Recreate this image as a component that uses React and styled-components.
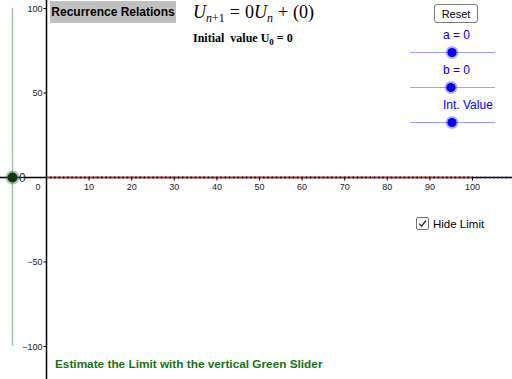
import React, { useState } from "react";
import styled, { createGlobalStyle } from "styled-components";

const Global = createGlobalStyle`
  html, body {
    margin: 0;
    padding: 0;
    background: #ffffff;
  }
`;

const Applet = styled.div`
  position: relative;
  width: 512px;
  height: 379px;
  overflow: hidden;
  background: #ffffff;
  font-family: "Liberation Sans", Arial, sans-serif;
`;

const Graph = styled.svg`
  position: absolute;
  left: 0;
  top: 0;
  display: block;
`;

/* header: title + formula block */
const Header = styled.div`
  position: absolute;
  left: 50px;
  top: 1px;
  display: flex;
  align-items: flex-start;
  gap: 17px;
`;

const TitleBox = styled.div`
  width: 126px;
  height: 22px;
  display: flex;
  align-items: center;
  justify-content: center;
  background: #c0c0c0;
  font-weight: bold;
  font-size: 12px;
  color: #000;
`;

const FormulaBlock = styled.div`
  display: flex;
  flex-direction: column;
  gap: 8px;
  font-family: "Liberation Serif", "Times New Roman", serif;
  color: #000;
  white-space: nowrap;
`;

const Formula = styled.div`
  font-size: 18px;
  line-height: 22px;
  display: flex;
  align-items: baseline;

  i {
    font-style: italic;
  }
  sub {
    font-size: 12px;
    vertical-align: -4px;
    line-height: 0;
  }
`;

const Op = styled.span`
  margin: 0 5px;
`;

const Initial = styled.div`
  font-size: 12px;
  line-height: 14px;
  font-weight: bold;
  white-space: pre;

  sub {
    font-size: 9px;
    vertical-align: -3px;
    line-height: 0;
  }
`;

/* right-hand control panel */
const Panel = styled.div`
  position: absolute;
  left: 410px;
  top: 4px;
  width: 85px;
  display: flex;
  flex-direction: column;
  gap: 5px;
`;

const ResetButton = styled.button`
  align-self: flex-start;
  margin-left: 24px;
  width: 44px;
  height: 19px;
  padding: 0;
  border: 1px solid #7a7a7a;
  border-radius: 3px;
  background: #ffffff;
  font-family: "Liberation Sans", Arial, sans-serif;
  font-size: 11px;
  color: #000;
`;

const SliderList = styled.div`
  display: flex;
  flex-direction: column;
`;

const SliderBlock = styled.div`
  display: flex;
  flex-direction: column;
`;

const SliderLabel = styled.div`
  padding-left: 33px;
  font-size: 12px;
  line-height: 14px;
  color: #0000ff;
  white-space: nowrap;
`;

const Track = styled.svg`
  display: block;
`;

const Slider = ({ label, pos }) => (
  <SliderBlock>
    <SliderLabel>{label}</SliderLabel>
    <Track width="85" height="21" viewBox="0 0 85 21">
      <line x1="0" y1="10.5" x2="85" y2="10.5" stroke="#a0a0ff" strokeWidth="1" />
      <circle cx={pos} cy="10.5" r="6.5" fill="#7070ff" opacity="0.55" />
      <circle cx={pos} cy="10.5" r="4.6" fill="#0000ff" />
    </Track>
  </SliderBlock>
);

const CheckRow = styled.label`
  position: absolute;
  left: 416px;
  top: 217px;
  display: flex;
  align-items: center;
  gap: 4px;
  font-size: 11.5px;
  color: #000;
`;

const Box = styled.span`
  width: 11px;
  height: 11px;
  border: 1px solid #707070;
  border-radius: 2px;
  display: flex;
  align-items: center;
  justify-content: center;
  background: #fff;
`;

const Hint = styled.div`
  position: absolute;
  left: 55px;
  top: 357px;
  font-size: 11.8px;
  font-weight: bold;
  color: #137313;
  white-space: nowrap;
`;

const X0 = 46.5;
const Y0 = 177.5;
const SX = 4.26;
const SY = 1.69;
const FONT = "Liberation Sans, Arial, sans-serif";

const Axes = () => {
  const xTicks = [10, 20, 30, 40, 50, 60, 70, 80, 90, 100];
  const yTicks = [100, 50, -50, -100];
  const points = [];
  for (let n = 0; n <= 108; n++) points.push(X0 + n * SX);

  return (
    <Graph width="512" height="379" viewBox="0 0 512 379">
      {/* green vertical slider */}
      <line x1="12.5" y1="8" x2="12.5" y2="346" stroke="#a3c4a3" strokeWidth="1.5" />

      {/* axes */}
      <line x1="0" y1={Y0} x2="512" y2={Y0} stroke="#000" strokeWidth="1.3" />
      <line x1={X0} y1="0" x2={X0} y2="379" stroke="#000" strokeWidth="1.5" />

      {xTicks.map((t) => (
        <g key={t}>
          <line x1={X0 + t * SX} y1={Y0} x2={X0 + t * SX} y2={Y0 + 3} stroke="#000" strokeWidth="1" />
          <text x={X0 + t * SX} y={Y0 + 12} fontSize="9" fontFamily={FONT} textAnchor="middle" fill="#222">
            {t}
          </text>
        </g>
      ))}
      <text x="38" y={Y0 + 12} fontSize="9" fontFamily={FONT} textAnchor="middle" fill="#222">
        0
      </text>

      {yTicks.map((t) => (
        <g key={t}>
          <line x1={X0 - 3} y1={Y0 - t * SY} x2={X0} y2={Y0 - t * SY} stroke="#000" strokeWidth="1" />
          <text x={X0 - 4} y={Y0 - t * SY + 3} fontSize="9" fontFamily={FONT} textAnchor="end" fill="#222">
            {t < 0 ? `\u2212${-t}` : t}
          </text>
        </g>
      ))}

      {/* limit line and sequence points */}
      <line x1={X0} y1={Y0} x2={X0 + 100 * SX} y2={Y0} stroke="#ff2020" strokeWidth="1.4" />
      {points.map((px, i) => (
        <circle key={i} cx={px} cy={Y0} r="1" fill={i > 100 ? "#1a1a60" : "#101020"} />
      ))}

      {/* green slider point */}
      <circle cx="12.5" cy={Y0} r="7" fill="#5a6e5a" opacity="0.45" />
      <circle cx="12.5" cy={Y0} r="5" fill="#0e3a0e" />
      <text x="19" y={Y0 + 4} fontSize="12" fontFamily={FONT} fill="#1a3a1a">
        0
      </text>
    </Graph>
  );
};

export default function App() {
  const [hide, setHide] = useState(true);
  return (
    <>
      <Global />
      <Applet>
        <Axes />
        <Header>
          <TitleBox>Recurrence Relations</TitleBox>
          <FormulaBlock>
            <Formula>
              <span>
                <i>U</i>
                <sub>
                  <i>n</i>+1
                </sub>
              </span>
              <Op>=</Op>
              <span>
                0<i>U</i>
                <sub>
                  <i>n</i>
                </sub>
              </span>
              <Op>+</Op>
              <span>(0)</span>
            </Formula>
            <Initial>
              {"Initial  value U"}
              <sub>0</sub>
              {" = 0"}
            </Initial>
          </FormulaBlock>
        </Header>
        <Panel>
          <ResetButton>Reset</ResetButton>
          <SliderList>
            <Slider label="a = 0" pos={42} />
            <Slider label="b = 0" pos={41} />
            <Slider label="Int. Value" pos={42} />
          </SliderList>
        </Panel>
        <CheckRow onClick={() => setHide(!hide)}>
          <Box>
            {hide && (
              <svg width="9" height="9" viewBox="0 0 9 9">
                <path d="M1.2 4.6 L3.6 7.2 L7.9 1.5" fill="none" stroke="#333" strokeWidth="1.4" />
              </svg>
            )}
          </Box>
          Hide Limit
        </CheckRow>
        <Hint>Estimate the Limit with the vertical Green Slider</Hint>
      </Applet>
    </>
  );
}
